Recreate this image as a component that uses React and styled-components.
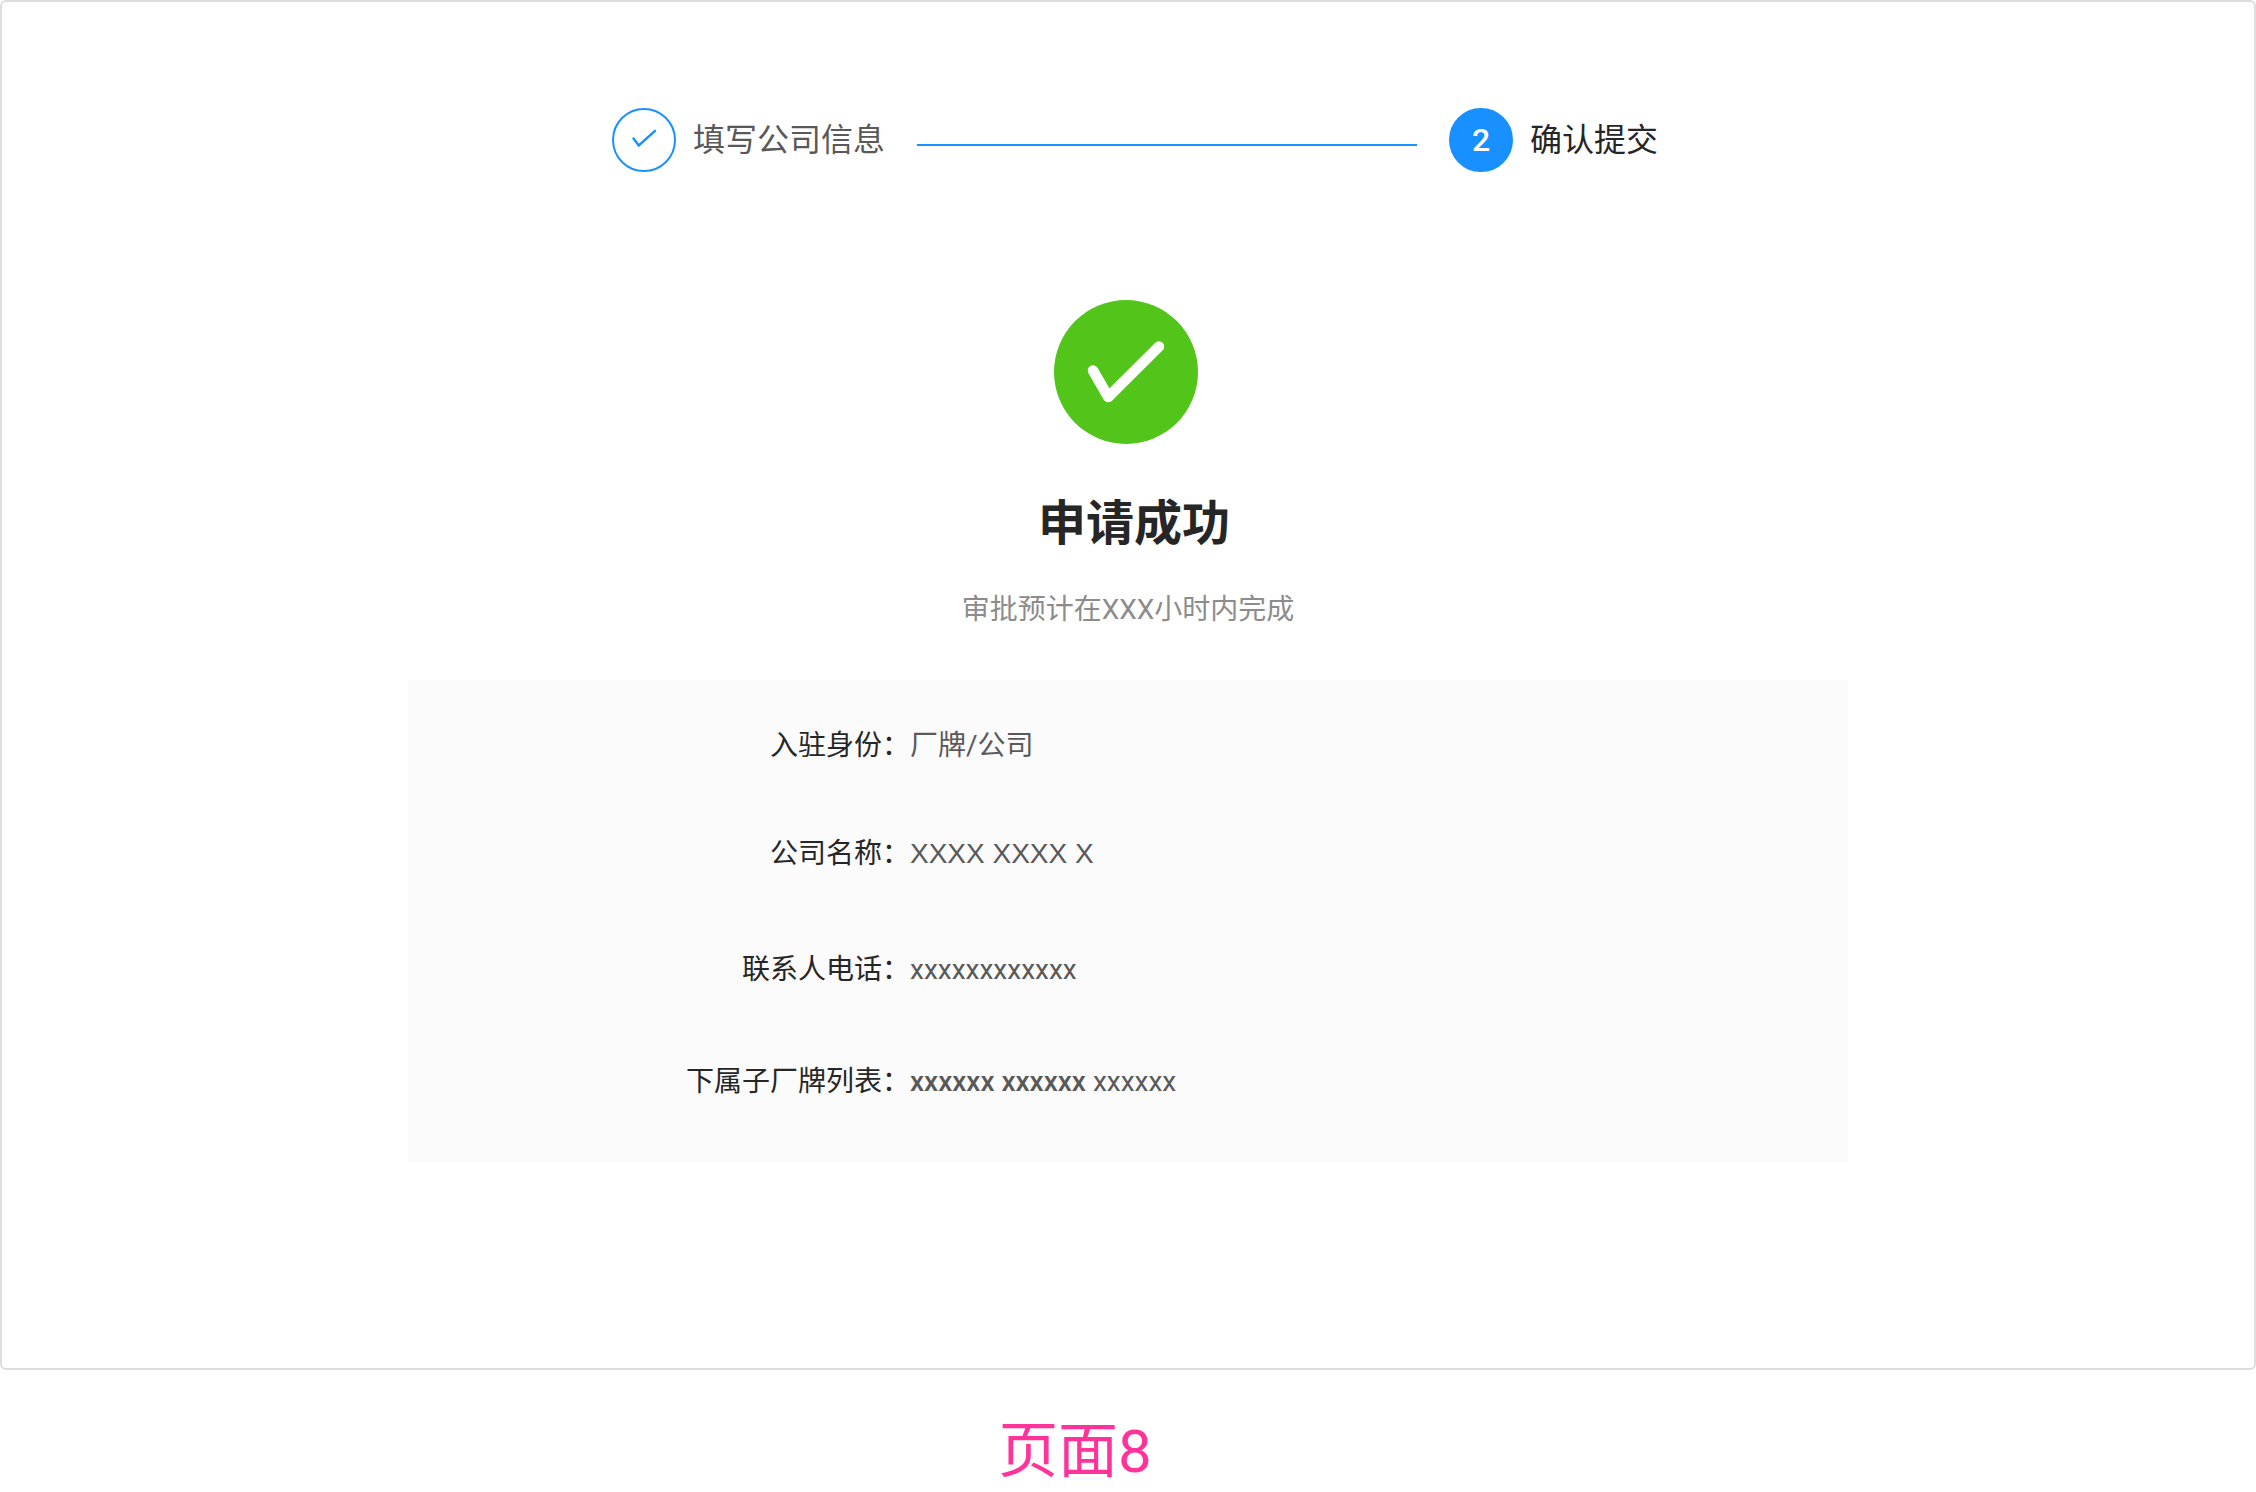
import React from "react";
import styled, { createGlobalStyle } from "styled-components";

const GlobalStyle = createGlobalStyle`
    * {
        box-sizing: border-box;
    }
    body {
        margin: 0;
        background: #ffffff;
        color: #262626;
        font-family: Roboto, "Noto Sans CJK SC", sans-serif;
    }
`;

const Card = styled.main`
    display: flex;
    flex-direction: column;
    align-items: center;
    padding: 106px 32px 206px;
    border: 2px solid #dddddd;
    border-radius: 6px;
`;

const Steps = styled.ol`
    display: flex;
    align-items: center;
    margin: 0;
    padding: 0 0 0 14px;
    list-style: none;
`;

const Step = styled.li`
    display: flex;
    align-items: center;
    gap: 17px;
    color: ${props => props.$current ? "#262626" : "#595959"};
    font-size: 32px;
    line-height: 48px;
    white-space: nowrap;
`;

const StepMark = styled.span`
    display: flex;
    align-items: center;
    justify-content: center;
    width: 64px;
    height: 64px;
    border: 2px solid #1890ff;
    border-radius: 50%;
    background: ${props => props.$filled ? "#1890ff" : "#ffffff"};
    color: #ffffff;
    font-weight: 500;
`;

const StepLine = styled.li`
    width: 500px;
    height: 2px;
    margin: 10px 32px 0;
    background: #1890ff;
`;

const Result = styled.section`
    display: flex;
    flex-direction: column;
    align-items: center;
    margin-top: 128px;
`;

const ResultIcon = styled.svg`
    width: 144px;
    height: 144px;
    margin-right: 4px;
`;

const Title = styled.h1`
    margin: 44px 0 0;
    padding-left: 12px;
    font-size: 48px;
    line-height: 72px;
    font-weight: 700;
`;

const Subtitle = styled.p`
    margin: 30px 0 0;
    color: #8c8c8c;
    font-size: 28px;
    line-height: 40px;
`;

const Details = styled.dl`
    width: 100%;
    max-width: 1440px;
    margin: 50px 0 0;
    padding: 46px 0 60px;
    background: #fbfbfb;
`;

const Row = styled.div`
    display: grid;
    grid-template-columns: 502px 1fr;
    margin-bottom: ${props => props.$space}px;
    font-size: 28px;
    line-height: 40px;
`;

const Label = styled.dt`
    text-align: right;
`;

const Value = styled.dd`
    margin: 0;
    color: #595959;
    font-family: ${props => props.$wide ? `"Liberation Sans", "Noto Sans CJK SC", sans-serif` : "inherit"};
    font-weight: ${props => props.$strong ? 500 : 400};
`;

const Light = styled.span`
    font-weight: 400;
`;

const PageName = styled.footer`
    padding: 42px 106px 0 0;
    color: #ff3399;
    font-size: 60px;
    line-height: 80px;
    text-align: center;
`;

const rows = [
    { label: "入驻身份：", value: "厂牌/公司", space: 68 },
    { label: "公司名称：", value: "XXXX XXXX X", space: 76, wide: true },
    { label: "联系人电话：", value: "xxxxxxxxxxxx", space: 72 },
    { label: "下属子厂牌列表：", value: <>xxxxxx xxxxxx <Light>xxxxxx</Light></>, space: 0, strong: true },
];

const App = () => (
    <>
        <GlobalStyle />
        <Card>
            <Steps>
                <Step>
                    <StepMark>
                        <svg width="60" height="60" viewBox="0 0 60 60" fill="none" stroke="#1890ff" strokeWidth="2.4" strokeLinecap="round" aria-hidden="true">
                            <path d="M19.5 28.5 L24.8 35.5 L41 20.8" />
                        </svg>
                    </StepMark>
                    填写公司信息
                </Step>
                <StepLine aria-hidden="true" />
                <Step $current aria-current="step">
                    <StepMark $filled>2</StepMark>
                    确认提交
                </Step>
            </Steps>

            <Result>
                <ResultIcon viewBox="0 0 144 144" fill="none" aria-hidden="true">
                    <circle cx="72" cy="72" r="72" fill="#52c41a" />
                    <path d="M39 70.5 L54.3 97 L105 46.5" stroke="#ffffff" strokeWidth="10.5" strokeLinecap="round" strokeLinejoin="round" />
                </ResultIcon>
                <Title>申请成功</Title>
                <Subtitle>审批预计在XXX小时内完成</Subtitle>
            </Result>

            <Details>
                {rows.map(row => (
                    <Row key={row.label} $space={row.space}>
                        <Label>{row.label}</Label>
                        <Value $strong={row.strong} $wide={row.wide}>{row.value}</Value>
                    </Row>
                ))}
            </Details>
        </Card>
        <PageName>页面8</PageName>
    </>
);

export default App;
